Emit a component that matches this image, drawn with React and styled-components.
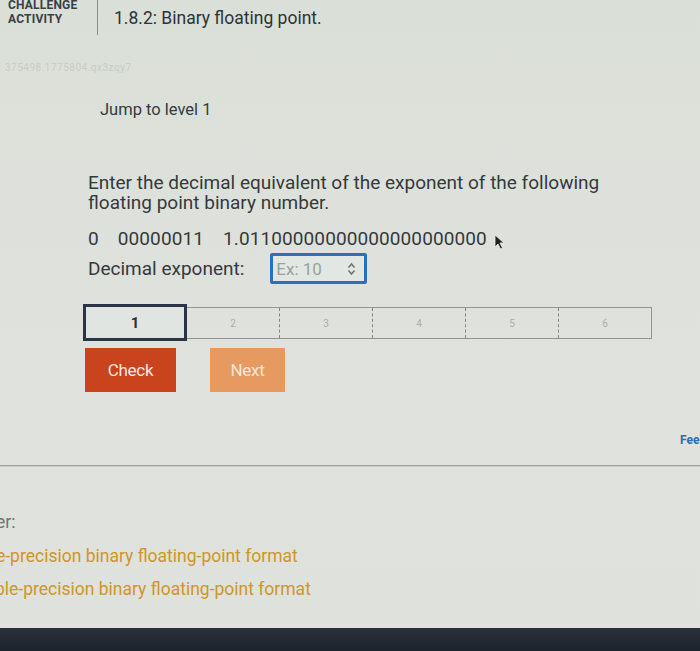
import React from 'react';
import styled, { createGlobalStyle } from 'styled-components';

const GlobalStyle = createGlobalStyle`
  html, body {
    margin: 0;
    padding: 0;
    background: #dde1da;
    font-family: Roboto, "Liberation Sans", Arial, sans-serif;
    color: #333;
    overflow: hidden;
  }
`;

const Page = styled.div`
  width: 700px;
  height: 651px;
  display: flex;
  flex-direction: column;
  overflow: hidden;
  background: linear-gradient(180deg, #dadfd8 0%, #e0e3dd 60%, #dfe2dc 100%);
`;

const Header = styled.div`
  display: flex;
  align-items: flex-start;
  height: 34px;
  margin-top: -2px;
`;

const Label = styled.div`
  width: 89px;
  padding-left: 8px;
  height: 37px;
  border-right: 1px solid #8d918c;
  font-size: 12px;
  font-weight: 700;
  line-height: 14px;
  color: #3a3f45;
  letter-spacing: 0.2px;
`;

const Title = styled.div`
  padding-left: 16px;
  padding-top: 10px;
  font-size: 17.5px;
  color: #2e3236;
`;

const RefId = styled.div`
  margin-top: 30px;
  padding-left: 5px;
  font-size: 10px;
  color: #c7ccc6;
  letter-spacing: 0.5px;
`;

const Jump = styled.div`
  margin-top: 27px;
  padding-left: 100px;
  font-size: 16.5px;
  color: #363a3e;
`;

const Content = styled.div`
  margin-top: 54px;
  padding-left: 88px;
  width: 560px;
  font-size: 19px;
  line-height: 20px;
  color: #35393d;
`;

const Prompt = styled.p`
  margin: 0;
`;

const Binary = styled.div`
  margin-top: 15px;
  display: flex;
  align-items: center;
  gap: 19px;
  font-size: 19px;
  letter-spacing: 0.1px;
`;

const Cursor = styled.svg`
  width: 12px;
  height: 16px;
  margin-left: -12px;
  margin-top: 6px;
`;

const AnswerRow = styled.div`
  margin-top: 3px;
  display: flex;
  align-items: center;
  gap: 26px;
`;

const InputBox = styled.div`
  box-sizing: border-box;
  width: 97px;
  height: 31px;
  border: 3px solid #2d6fbf;
  border-radius: 2px;
  background: #e3e7e4;
  display: flex;
  align-items: center;
  justify-content: space-between;
  padding: 0 8px 0 3px;
  font-size: 17px;
  color: #9aa09d;
`;

const Spinner = styled.svg`
  width: 9px;
  height: 14px;
`;

const LevelBar = styled.div`
  margin: 23px 0 0 83px;
  width: 569px;
  height: 32px;
  display: flex;
  border: 1px solid #8f9593;
  box-sizing: border-box;
`;

const Level = styled.div`
  box-sizing: border-box;
  flex: ${(p) => (p.$current ? '0 0 104px' : '1')};
  display: flex;
  align-items: center;
  justify-content: center;
  font-size: ${(p) => (p.$current ? '15px' : '10px')};
  font-weight: ${(p) => (p.$current ? 700 : 400)};
  color: ${(p) => (p.$current ? '#2b3037' : '#a9aeab')};
  border-left: ${(p) => (p.$first ? 'none' : '1px dashed #7d8482')};
  ${(p) =>
    p.$current &&
    `
    margin: -4px 0 -3px -1px;
    border: 3px solid #2b3446;
    background: #e1e5e1;
  `}
`;

const Buttons = styled.div`
  margin: 9px 0 0 85px;
  display: flex;
  gap: 34px;
`;

const Button = styled.div`
  width: ${(p) => p.$w}px;
  height: 44px;
  display: flex;
  align-items: center;
  justify-content: center;
  background: ${(p) => p.$bg};
  color: ${(p) => p.$fg};
  font-size: 17px;
  letter-spacing: -0.3px;
`;

const Feedback = styled.div`
  margin-top: 41px;
  align-self: flex-end;
  margin-right: -10px;
  font-size: 12px;
  font-weight: 700;
  color: #2a6cb5;
  width: 30px;
`;

const Divider = styled.div`
  margin-top: 18px;
  height: 1px;
  background: #9ea39f;
  box-shadow: 0 1px 0 #c9cdc8;
`;

const Lower = styled.div`
  flex: 1;
  border-left: 2px solid #4a4f55;
  padding-top: 46px;
  margin-left: -2px;
`;

const Faded = styled.div`
  font-size: 17.5px;
  color: #6f7470;
  margin-left: -4px;
`;

const Link = styled.div`
  font-size: 17.5px;
  color: #cf9526;
  margin-left: ${(p) => p.$offset}px;
  margin-top: ${(p) => p.$top}px;
`;

const Bottom = styled.div`
  height: 23px;
  background: linear-gradient(180deg, #2a313c 0%, #1d232c 100%);
`;

export default function App() {
  return (
    <Page>
      <GlobalStyle />
      <Header>
        <Label>
          CHALLENGE
          <br />
          ACTIVITY
        </Label>
        <Title>1.8.2: Binary floating point.</Title>
      </Header>
      <RefId>375498.1775804.qx3zqy7</RefId>
      <Jump>Jump to level 1</Jump>
      <Content>
        <Prompt>
          Enter the decimal equivalent of the exponent of the following floating point binary number.
        </Prompt>
        <Binary>
          <span>0</span>
          <span>00000011</span>
          <span>1.01100000000000000000000</span>
          <Cursor viewBox="0 0 12 16">
            <path d="M1 1 L1 13 L4 10 L6.5 15 L8.5 14 L6 9 L10 9 Z" fill="#222" stroke="#eee" strokeWidth="0.8" />
          </Cursor>
        </Binary>
        <AnswerRow>
          <span>Decimal exponent:</span>
          <InputBox>
            <span>Ex: 10</span>
            <Spinner viewBox="0 0 9 14">
              <path d="M1.5 5.5 L4.5 2 L7.5 5.5 M1.5 8.5 L4.5 12 L7.5 8.5" fill="none" stroke="#6c7270" strokeWidth="1.5" />
            </Spinner>
          </InputBox>
        </AnswerRow>
      </Content>
      <LevelBar>
        <Level $current $first>1</Level>
        {[2, 3, 4, 5, 6].map((n, i) => (
          <Level key={n} $first={i === 0}>
            {n}
          </Level>
        ))}
      </LevelBar>
      <Buttons>
        <Button $w={91} $bg="#c9431c" $fg="#f6e9e2">Check</Button>
        <Button $w={75} $bg="#e79a5f" $fg="#f7e6da">Next</Button>
      </Buttons>
      <Feedback>Feedback?</Feedback>
      <Divider />
      <Lower>
        <Faded>er:</Faded>
        <Link $offset={-4} $top={14}>e-precision binary floating-point format</Link>
        <Link $offset={-5} $top={13}>ple-precision binary floating-point format</Link>
      </Lower>
      <Bottom />
    </Page>
  );
}
